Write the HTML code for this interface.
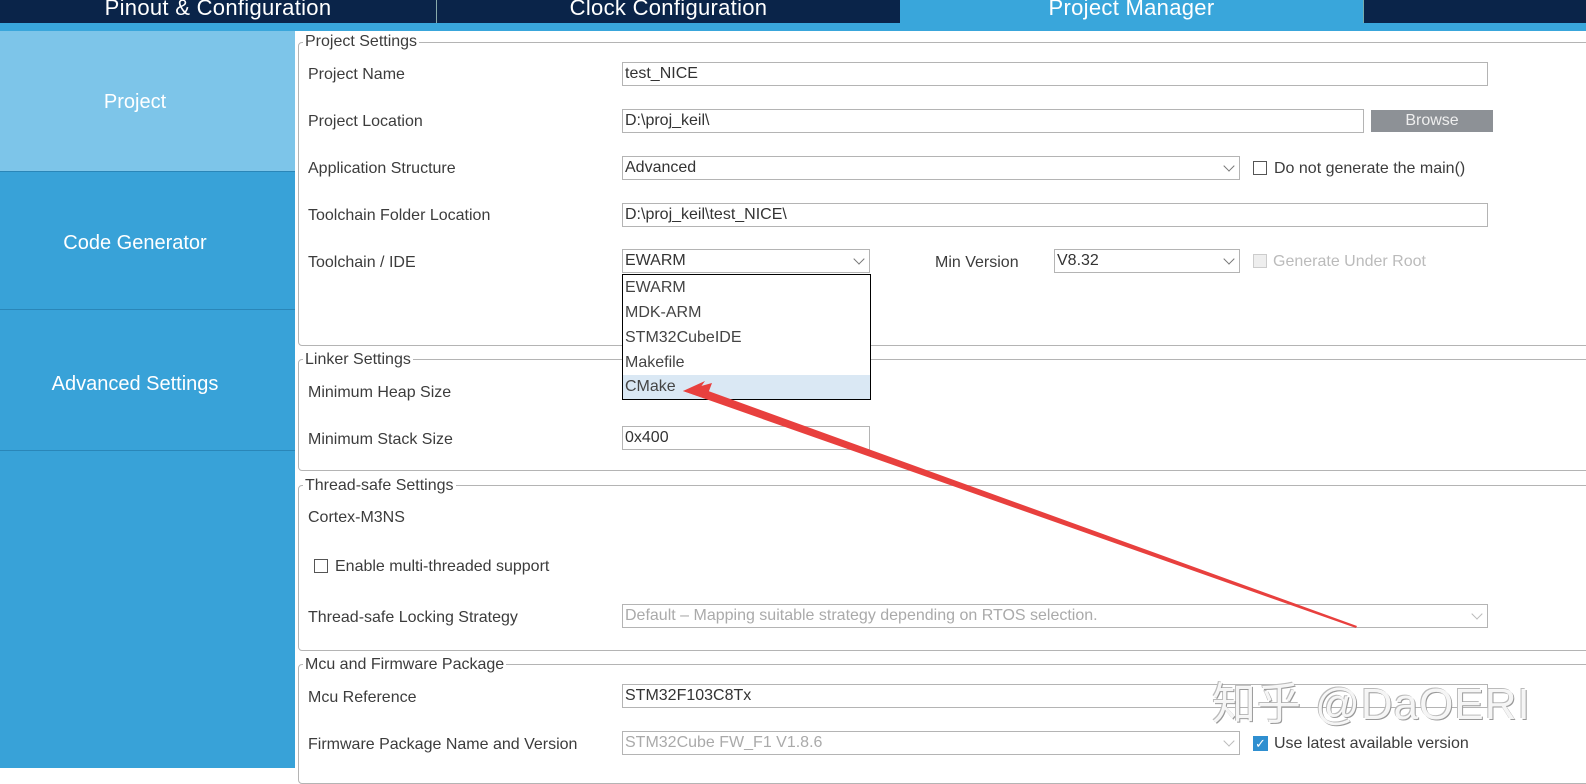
<!DOCTYPE html>
<html><head><meta charset="utf-8"><style>
*{box-sizing:border-box;margin:0;padding:0}
body{width:1586px;height:768px;overflow:hidden;background:#fff;font-family:"Liberation Sans",sans-serif;position:relative;color:#3c3c3c}
.a{position:absolute}
.tab{position:absolute;top:0;height:23px;color:#fff;font-size:22px;text-align:center;line-height:16px;overflow:hidden;letter-spacing:0.3px}
.lbl{position:absolute;font-size:16px;color:#3c3c3c;left:308px}
.in{position:absolute;height:24px;border:1px solid #b4b4b4;font-size:16px;line-height:22px;padding-left:2px;color:#333;background:#fff}
.fs{position:absolute;left:298px;right:-10px;border:1px solid #b4b4b4;border-radius:4px}
.leg{position:absolute;font-size:16px;background:#fff;padding:0 2px;color:#3c3c3c}
.chev{position:absolute;right:6px;top:5px;width:8px;height:8px;border-right:1px solid #777;border-bottom:1px solid #777;transform:rotate(45deg)}
.cb{position:absolute;width:14px;height:14px;border:1px solid #555;background:#fff}
.side{position:absolute;left:0;width:270px;color:#fff;font-size:20px;text-align:center}
</style></head><body>
<div class="a" style="left:0;top:0;width:1586px;height:23px;background:#0a2449"></div>
<div class="a" style="left:0;top:23px;width:1586px;height:8px;background:#39a6db"></div>
<div class="tab" style="left:0;width:437px;border-right:1px solid #8aa">Pinout &amp; Configuration</div>
<div class="tab" style="left:437px;width:463px">Clock Configuration</div>
<div class="tab" style="left:900px;width:463px;background:#39a6db">Project Manager</div>
<div class="a" style="left:1363px;top:0;width:1px;height:23px;background:#7aa"></div>

<div class="a" style="left:0;top:31px;width:295px;height:737px;background:#38a2d8"></div>
<div class="a" style="left:0;top:31px;width:295px;height:140px;background:#7dc5e9"></div>
<div class="side" style="top:31px;height:140px;line-height:142px">Project</div>
<div class="a" style="left:0;top:171px;width:295px;height:1px;background:#2a86b8"></div>
<div class="side" style="top:172px;height:137px;line-height:142px">Code Generator</div>
<div class="a" style="left:0;top:309px;width:295px;height:1px;background:#2a86b8"></div>
<div class="side" style="top:310px;height:140px;line-height:148px">Advanced Settings</div>
<div class="a" style="left:0;top:450px;width:295px;height:1px;background:#2a86b8"></div>

<div class="fs" style="top:42px;height:304px"></div>
<div class="leg" style="left:303px;top:33px">Project Settings</div>
<div class="lbl" style="top:66px">Project Name</div>
<div class="in" style="left:622px;top:62px;width:866px">test_NICE</div>
<div class="lbl" style="top:113px">Project Location</div>
<div class="in" style="left:622px;top:109px;width:742px">D:\proj_keil\</div>
<div class="a" style="left:1371px;top:110px;width:122px;height:22px;background:#8d9196;color:#eee;font-size:16px;text-align:center;line-height:22px">Browse</div>
<div class="lbl" style="top:160px">Application Structure</div>
<div class="in" style="left:622px;top:156px;width:618px">Advanced<div class="chev"></div></div>
<div class="cb" style="left:1253px;top:161px"></div>
<div class="a" style="left:1274px;top:160px;font-size:16px">Do not generate the main()</div>
<div class="lbl" style="top:207px">Toolchain Folder Location</div>
<div class="in" style="left:622px;top:203px;width:866px">D:\proj_keil\test_NICE\</div>
<div class="lbl" style="top:254px">Toolchain / IDE</div>
<div class="in" style="left:622px;top:249px;width:248px">EWARM<div class="chev"></div></div>
<div class="a" style="left:935px;top:254px;font-size:16px">Min Version</div>
<div class="in" style="left:1054px;top:249px;width:186px">V8.32<div class="chev"></div></div>
<div class="cb" style="left:1253px;top:254px;border-color:#ccc;background:#eee"></div>
<div class="a" style="left:1273px;top:253px;font-size:16px;color:#bbb">Generate Under Root</div>

<div class="fs" style="top:359px;height:112px"></div>
<div class="leg" style="left:303px;top:351px">Linker Settings</div>
<div class="lbl" style="top:384px">Minimum Heap Size</div>
<div class="lbl" style="top:431px">Minimum Stack Size</div>
<div class="in" style="left:622px;top:426px;width:248px">0x400</div>

<div class="fs" style="top:485px;height:166px"></div>
<div class="leg" style="left:303px;top:477px">Thread-safe Settings</div>
<div class="lbl" style="top:509px">Cortex-M3NS</div>
<div class="cb" style="left:314px;top:559px"></div>
<div class="a" style="left:335px;top:558px;font-size:16px">Enable multi-threaded support</div>
<div class="lbl" style="top:609px">Thread-safe Locking Strategy</div>
<div class="in" style="left:622px;top:604px;width:866px;color:#aaa">Default – Mapping suitable strategy depending on RTOS selection.<div class="chev" style="border-color:#bbb"></div></div>

<div class="fs" style="top:664px;height:120px"></div>
<div class="leg" style="left:303px;top:656px">Mcu and Firmware Package</div>
<div class="lbl" style="top:689px">Mcu Reference</div>
<div class="in" style="left:622px;top:684px;width:866px">STM32F103C8Tx</div>
<div class="lbl" style="top:736px">Firmware Package Name and Version</div>
<div class="in" style="left:622px;top:731px;width:618px;color:#aaa">STM32Cube FW_F1 V1.8.6<div class="chev" style="border-color:#bbb"></div></div>
<div class="a" style="left:1253px;top:736px;width:15px;height:15px;background:#2f8fd0;color:#fff;font-size:13px;line-height:15px;text-align:center">✓</div>
<div class="a" style="left:1274px;top:735px;font-size:16px">Use latest available version</div>

<div class="a" style="left:622px;top:274px;width:249px;height:126px;border:1px solid #000;background:#fff;font-size:16px;color:#444">
<div style="height:25px;line-height:25px;padding-left:2px">EWARM</div>
<div style="height:25px;line-height:25px;padding-left:2px">MDK-ARM</div>
<div style="height:25px;line-height:25px;padding-left:2px">STM32CubeIDE</div>
<div style="height:25px;line-height:25px;padding-left:2px">Makefile</div>
<div style="height:24px;line-height:24px;padding-left:2px;background:#dae8f4">CMake</div>
</div>

<svg class="a" style="left:0;top:0" width="1586" height="768">
<polygon points="683,391 1356,628 1357,626 700,388 705,381" fill="#e8403e"/>
<polygon points="683,391 712,383 706,399" fill="#e8403e"/>
</svg>
<div class="a" style="left:1212px;top:668px;font-size:44px;color:rgba(255,255,255,0.9);font-family:'Liberation Sans','Noto Sans CJK SC',sans-serif;text-shadow:1px 1px 0 #999,-1px -1px 0 #bbb;letter-spacing:1px">知乎 @DaOERI</div>
</body></html>
